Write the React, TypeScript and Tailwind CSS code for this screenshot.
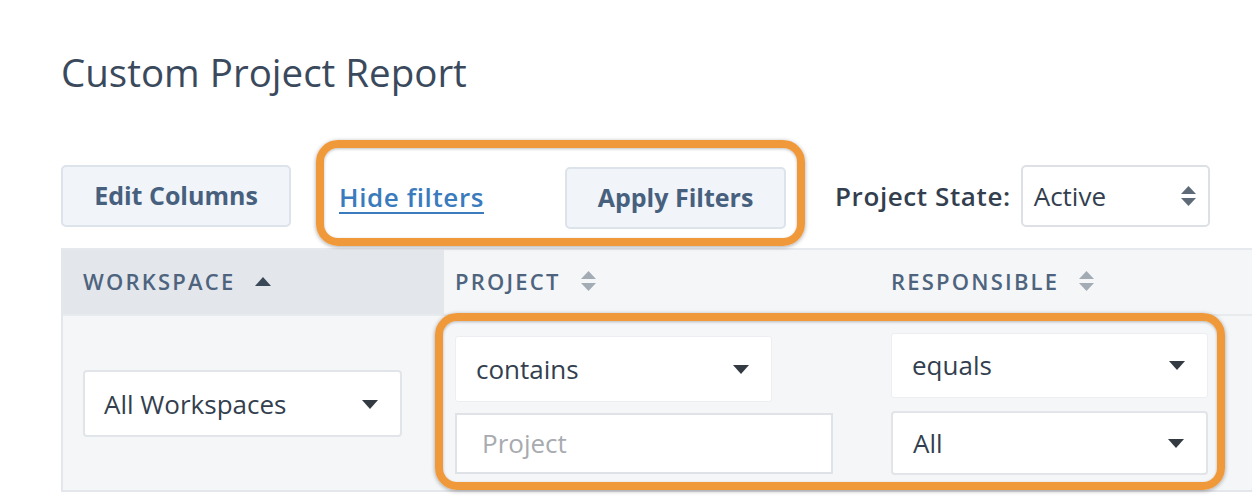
import type { ReactNode } from 'react'

const FONT = { fontFamily: '"Open Sans", "Liberation Sans", sans-serif' }

function Caret({ className = '' }: { className?: string }) {
  return (
    <svg width="16" height="9" viewBox="0 0 16 9" className={className}>
      <path d="M0 0h16L8 9z" fill="#333a42" />
    </svg>
  )
}

function SortBoth({ color = '#a3abb5' }: { color?: string }) {
  return (
    <svg width="15" height="20" viewBox="0 0 15 20">
      <path d="M7.5 0L15 8H0z" fill={color} />
      <path d="M7.5 20L15 12H0z" fill={color} />
    </svg>
  )
}

function SortUp() {
  return (
    <svg width="16" height="9" viewBox="0 0 16 9">
      <path d="M8 0l8 9H0z" fill="#3a4858" />
    </svg>
  )
}

function Select({ label, className = '' }: { label: string; className?: string }) {
  return (
    <div
      className={`flex items-center justify-between bg-white border-2 border-[#e1e4e8] rounded-[4px] pr-[22px] text-[26px] text-[#333f4f] ${className}`}
    >
      <span>{label}</span>
      <Caret />
    </div>
  )
}

function Header({ children, sort, active = false, className = '' }: { children: ReactNode; sort: ReactNode; active?: boolean; className?: string }) {
  return (
    <div
      className={`flex items-center gap-[20px] h-full pb-[2px] text-[22px] font-semibold tracking-[2.2px] text-[#4e647e] ${active ? 'bg-[#e3e7ec]' : ''} ${className}`}
    >
      <span>{children}</span>
      {sort}
    </div>
  )
}

export default function App() {
  return (
    <div className="w-[1252px] h-[498px] overflow-hidden bg-white" style={FONT}>
      <div className="pl-[61px]">
        <h1 className="pt-[48px] text-[38.5px] leading-[48px] text-[#3a4a5c]">Custom Project Report</h1>

        {/* toolbar */}
        <div className="flex items-start mt-[44px] h-[108px]">
          <button className="mt-[25px] w-[230px] h-[62px] bg-[#f1f4f8] border-2 border-[#dde3ea] rounded-[5px] text-[25px] font-bold text-[#46607e]">
            Edit Columns
          </button>

          <div className="ml-[25px] flex items-center h-[106px] w-[489px] border-[8px] border-[#f0993b] rounded-[22px] pl-[15px] pr-[11px] pt-[9px] shadow-[0_1px_4px_rgba(0,0,0,0.35),inset_0_1px_3px_rgba(0,0,0,0.25)]">
            <a href="#" className="text-[26px] font-semibold tracking-[0.6px] text-[#3a7bbd] underline underline-offset-[5px] decoration-2">
              Hide filters
            </a>
            <button className="ml-auto w-[221px] h-[62px] bg-[#f1f4f8] border-2 border-[#dde3ea] rounded-[5px] text-[25px] font-bold text-[#46607e]">
              Apply Filters
            </button>
          </div>

          <div className="mt-[25px] ml-[30px] flex items-center h-[62px]">
            <span className="text-[26px] font-semibold tracking-[0.6px] text-[#333f4f]">Project State:</span>
            <div className="ml-[10px] flex items-center justify-between w-[189px] h-[62px] bg-white border-2 border-[#dde1e6] rounded-[5px] pl-[11px] pr-[12px] text-[26px] text-[#333f4f]">
              <span>Active</span>
              <SortBoth color="#5f6a77" />
            </div>
          </div>
        </div>

        {/* table */}
        <div className="w-[1240px] border-t-2 border-[#e6e9ed] border-l-2 border-l-[#e3e6ea]">
          <div className="flex h-[66px] bg-[#f5f6f8] border-b-2 border-[#e8ebee]">
            <Header active sort={<SortUp />} className="w-[381px] pl-[20px]">WORKSPACE</Header>
            <Header sort={<SortBoth />} className="w-[428px] pl-[11px]">PROJECT</Header>
            <Header sort={<SortBoth />} className="flex-1 pl-[19px]">RESPONSIBLE</Header>
          </div>

          <div className="flex h-[176px] bg-[#f5f6f8] border-b-2 border-[#e3e6ea]">
            <div className="w-[381px] flex items-center pl-[20px]">
              <Select label="All Workspaces" className="w-[319px] h-[67px] pl-[19px] pt-[2px]" />
            </div>

            <div className="-ml-[9px] -mt-[3px] flex w-[790px] h-[177px] border-[8px] border-[#f0993b] rounded-[22px] pl-[12px] pt-[12px] shadow-[0_1px_4px_rgba(0,0,0,0.35),inset_0_1px_3px_rgba(0,0,0,0.25)]">
              <div className="mt-[3px] flex flex-col gap-[11px] w-[378px]">
                <div className="flex items-center justify-between w-[317px] h-[66px] bg-white border border-[#eceef1] rounded-[3px] pl-[20px] pr-[22px] text-[26px] text-[#333f4f]">
                  <span>contains</span>
                  <Caret />
                </div>
                <div className="flex items-center w-[378px] h-[61px] bg-white border-2 border-[#dfe2e6] pl-[25px] text-[26px] text-[#a8abaf]">
                  Project
                </div>
              </div>
              <div className="ml-[58px] flex flex-col gap-[13px] w-[317px]">
                <div className="flex items-center justify-between h-[65px] bg-white border border-[#eceef1] rounded-[3px] pl-[20px] pr-[22px] text-[26px] text-[#333f4f]">
                  <span>equals</span>
                  <Caret />
                </div>
                <Select label="All" className="h-[64px] pl-[20px]" />
              </div>
            </div>
          </div>
        </div>
      </div>
    </div>
  )
}
